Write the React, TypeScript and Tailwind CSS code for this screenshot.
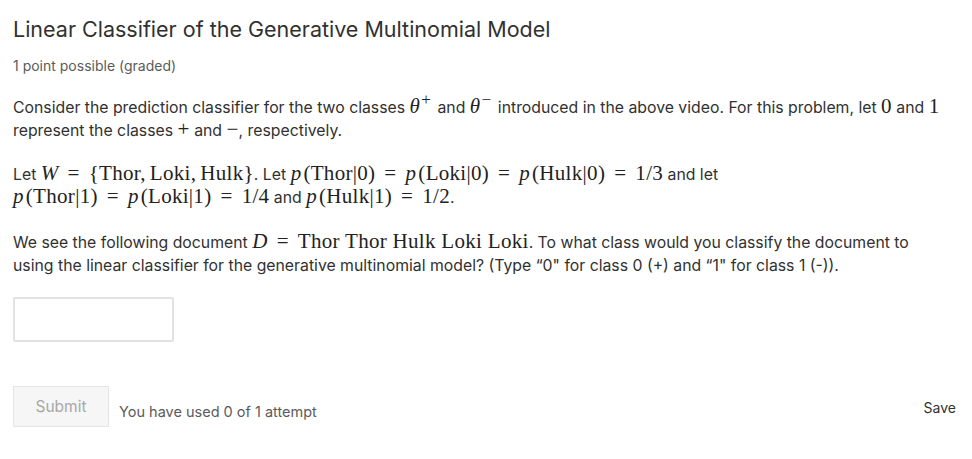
import React from "react";

const M = ({ children }: { children: React.ReactNode }) => (
  <span
    className="text-[21px] leading-[18px] tracking-[0.3px] text-[#222]"
    style={{ fontFamily: '"Liberation Serif", "DejaVu Serif", serif' }}
  >
    {children}
  </span>
);
const I = ({ children }: { children: React.ReactNode }) => <i>{children}</i>;
const Op = ({ children }: { children: React.ReactNode }) => <span className="mx-[9px]">{children}</span>;
const P = ({ w }: { w: string }) => (
  <>
    <I>p</I>
    <span className="ml-[2px]">({w})</span>
  </>
);

export default function App() {
  return (
    <div
      className="w-[972px] h-[459px] bg-white text-[#313131] pl-[13px] pr-[16px] pt-[15px]"
      style={{ fontFamily: 'Inter, "Noto Sans", sans-serif' }}
    >
      <h2 className="text-[21.5px] leading-[28px] font-normal text-[#313131]">
        Linear Classifier of the Generative Multinomial Model
      </h2>
      <div className="mt-[14px] text-[14px] leading-[17px] text-[#5b5b5b]">1 point possible (graded)</div>

      <div className="pr-[6px]">
        <p className="mt-[23px] text-[15.8px] leading-[22.5px] text-[#313131]">
          Consider the prediction classifier for the two classes{" "}
          <M>
            <I>θ</I>
            <sup className="text-[17px] ml-[1px] mr-[2px] top-[-0.45em]">+</sup>
          </M>{" "}
          and{" "}
          <M>
            <I>θ</I>
            <sup className="text-[17px] ml-[1px] mr-[2px] top-[-0.45em]">−</sup>
          </M>{" "}
          introduced in the above video. For this problem, let <M>0</M> and <M>1</M> represent the classes <M>+</M>{" "}
          and <M>−</M>, respectively.
        </p>

        <p className="mt-[22px] text-[15.8px] leading-[22.5px]">
          Let{" "}
          <M>
            <I>W</I>
            <Op>=</Op>
            {"{"}Thor,<span className="ml-[4px]">Loki,</span>
            <span className="ml-[4px]">Hulk</span>
            {"}"}
          </M>
          . Let{" "}
          <M>
            <P w="Thor|0" />
            <Op>=</Op>
            <P w="Loki|0" />
            <Op>=</Op>
            <P w="Hulk|0" />
            <Op>=</Op>1/3
          </M>{" "}
          and let{" "}
          <M>
            <P w="Thor|1" />
            <Op>=</Op>
            <P w="Loki|1" />
            <Op>=</Op>1/4
          </M>{" "}
          and{" "}
          <M>
            <P w="Hulk|1" />
            <Op>=</Op>1/2
          </M>
          .
        </p>

        <p className="mt-[23px] text-[15.8px] leading-[22.5px]">
          We see the following document{" "}
          <M>
            <I>D</I>
            <Op>=</Op>Thor Thor Hulk Loki Loki
          </M>
          . To what class would you classify the document to using the linear classifier for the generative
          multinomial model? (Type “0" for class 0 (+) and “1" for class 1 (-)).
        </p>
      </div>

      <div className="mt-[20px] flex">
        <input
          type="text"
          className="w-[161px] h-[45px] border-2 border-[#e2e2e2] rounded-[2px] bg-white outline-none"
        />
      </div>

      <div className="mt-[44px] flex items-start">
        <button className="w-[96px] h-[41px] border border-[#e5e5e5] bg-[#f6f6f6] text-[#a8a8a8] text-[15.5px] leading-none pt-[1px]">
          Submit
        </button>
        <span className="ml-[10px] mt-[17px] text-[14.5px] leading-[17px] text-[#5b5b5b]">You have used 0 of 1 attempt</span>
        <span className="ml-auto mt-[13px] text-[14px] leading-[17px] text-[#313131]">Save</span>
      </div>
    </div>
  );
}
